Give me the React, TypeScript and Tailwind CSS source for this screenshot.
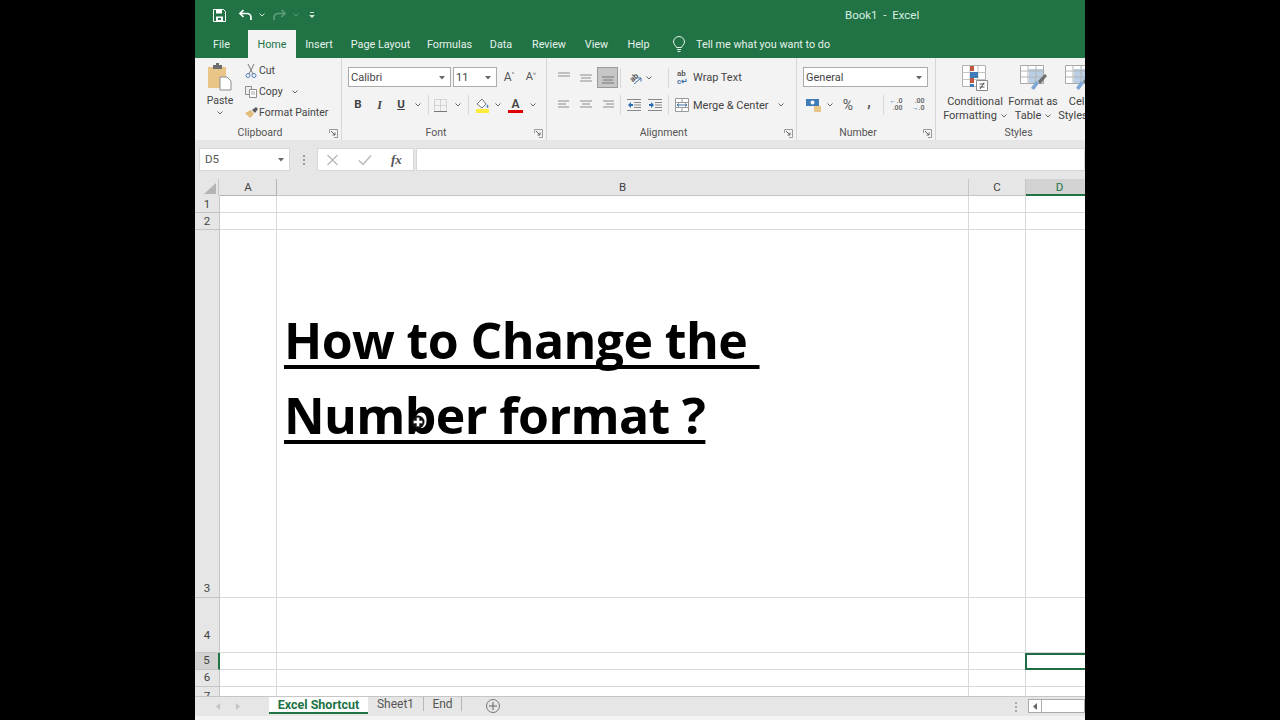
import React from "react";

const Chev = ({ c = "#666" }: { c?: string }) => (
  <svg width="6" height="4" viewBox="0 0 6 4" className="shrink-0">
    <path d="M.5.5 3 3 5.500.5" fill="none" stroke={c} strokeWidth="1" />
  </svg>
);

const Caret = () => (
  <svg width="6" height="4" viewBox="0 0 6 4" className="shrink-0">
    <path d="M0 0h6L3 3.500z" fill="#666" />
  </svg>
);

const Launcher = () => (
  <span className="flex w-[16px] justify-end pr-[3px]">
    <svg width="9" height="9" viewBox="0 0 9 9">
      <path d="M.5 4V.5h8v8H5" fill="none" stroke="#9a9a9a" />
      <path d="M2 2l4 4M6 3.500V6H3.500" fill="none" stroke="#666" />
    </svg>
  </span>
);

const Sep = () => <span className="h-[20px] w-px bg-[#d8d8d8]" />;

const Slot = ({ w, children }: { w: number; children?: React.ReactNode }) => (
  <span className="flex shrink-0 items-center justify-center" style={{ width: w }}>
    {children}
  </span>
);

const Lines = ({ rows, active }: { rows: [number, number, number][]; active?: boolean }) => (
  <svg width="16" height="14" viewBox="0 0 16 14">
    {rows.map(([x1, x2, y], i) => (
      <path key={i} d={`M${x1} ${y}H${x2}`} stroke={active ? "#777" : "#8c8c8c"} strokeWidth="1" />
    ))}
  </svg>
);

const Group = ({
  w,
  label,
  launcher = true,
  children,
}: {
  w: number;
  label: string;
  launcher?: boolean;
  children: React.ReactNode;
}) => (
  <div className="flex h-[82px] shrink-0 flex-col border-r border-[#d6d6d6]" style={{ width: w }}>
    <div className="min-h-0 flex-1">{children}</div>
    <div className="flex h-[14px] items-center text-[10.500px] text-[#555]">
      <span className="flex-1 text-center">{label}</span>
      {launcher ? <Launcher /> : null}
    </div>
  </div>
);

const SmallRow = ({ icon, label, chev }: { icon: React.ReactNode; label: string; chev?: boolean }) => (
  <div className="flex h-[21px] items-center text-[10.500px] text-[#444]">
    <span className="flex w-[16px] justify-center">{icon}</span>
    <span className="pt-px">{label}</span>
    {chev ? (
      <span className="ml-[9px]">
        <Chev />
      </span>
    ) : null}
  </div>
);

const tabs = [
  { name: "File", w: 53 },
  { name: "Home", w: 48, active: true },
  { name: "Insert", w: 46 },
  { name: "Page Layout", w: 77 },
  { name: "Formulas", w: 61 },
  { name: "Data", w: 42 },
  { name: "Review", w: 54 },
  { name: "View", w: 41 },
  { name: "Help", w: 43 },
];

const colHeads = [
  { name: "A", cls: "w-[57px] border-r border-[#b4b4b4]" },
  { name: "B", cls: "w-[692px] border-r border-[#c6c6c6]" },
  { name: "C", cls: "w-[57px] border-r border-[#c6c6c6]" },
  { name: "D", cls: "w-[67px] bg-[#d2d2d2] text-[#217346] border-b-2 border-b-[#217346]" },
];

const rowDefs = [
  { n: "1", h: "h-[17px]", lab: "pb-[1px]" },
  { n: "2", h: "h-[17px]", lab: "pb-[1px]" },
  { n: "3", h: "h-[368px]", lab: "pb-[2px]" },
  { n: "4", h: "h-[55px]", lab: "pb-[10px]" },
  { n: "5", h: "h-[17px]", lab: "pb-[2px]", active: true },
  { n: "6", h: "h-[17px]", lab: "pb-[2px]" },
  { n: "7", h: "h-[17px]", lab: "" },
];

function TitleBar() {
  return (
    <div className="flex h-[30px] items-center bg-[#217346] pl-[18px]">
      <svg width="13" height="13" viewBox="0 0 13 13">
        <path d="M.5.500h10l2 2v10H.5z" fill="none" stroke="#fff" />
        <path d="M3 1h6v3.500H3z" fill="#fff" />
        <path d="M3 7.500h7v5H3z" fill="#fff" />
        <path d="M5 9h3v2H5z" fill="#217346" />
      </svg>
      <svg width="14" height="12" viewBox="0 0 14 12" className="ml-[13px]">
        <path d="M4.500 1 1 4.500 4.500 8" fill="none" stroke="#fff" strokeWidth="1.700" />
        <path d="M1.500 4.500H8a4 4 0 0 1 4 4V11" fill="none" stroke="#fff" strokeWidth="1.700" />
      </svg>
      <span className="ml-[6px]">
        <Chev c="#cfe5d8" />
      </span>
      <svg width="14" height="12" viewBox="0 0 14 12" className="ml-[7px]">
        <path d="M9.500 1 13 4.500 9.500 8" fill="none" stroke="#5c9d79" strokeWidth="1.700" />
        <path d="M12.500 4.500H6a4 4 0 0 0-4 4V11" fill="none" stroke="#5c9d79" strokeWidth="1.700" />
      </svg>
      <span className="ml-[7px]">
        <Chev c="#5c9d79" />
      </span>
      <svg width="6" height="7" viewBox="0 0 6 7" className="ml-[10px]">
        <path d="M1 0h4v1H1zM0 3h6L3 6z" fill="#cfe5d8" />
      </svg>
      <span className="ml-[530px] pt-px text-[11.500px] text-[#d7efe1]">Book1&nbsp; -&nbsp; Excel</span>
    </div>
  );
}

function TabBar() {
  return (
    <div className="flex h-[28px] items-stretch bg-[#217346] text-[10.800px] text-[#e6f2eb]">
      {tabs.map((t) =>
        t.active ? (
          <div
            key={t.name}
            className="flex items-center justify-center bg-[#f3f3f3] pt-[2px] text-[#217346]"
            style={{ width: t.w }}
          >
            {t.name}
          </div>
        ) : (
          <div key={t.name} className="flex items-center justify-center pt-[2px]" style={{ width: t.w }}>
            {t.name}
          </div>
        )
      )}
      <div className="ml-[12px] flex items-center">
        <svg width="14" height="17" viewBox="0 0 14 17">
          <path
            d="M4.500 11.500C4 9.500 1.500 8.500 1.500 6a5.500 5.500 0 0 1 11 0c0 2.500-2.500 3.500-3 5.500z"
            fill="none"
            stroke="#e6f2eb"
          />
          <path d="M5 13.500h4M5.500 15.500h3" stroke="#e6f2eb" />
        </svg>
        <span className="ml-[10px] pt-[2px]">Tell me what you want to do</span>
      </div>
    </div>
  );
}

function Clipboard() {
  return (
    <Group w={147} label="Clipboard">
      <div className="flex pl-[11px] pt-[2px]">
        <div className="mt-[3px] flex w-[28px] flex-col items-center text-[10.500px] text-[#444]">
          <svg width="26" height="28" viewBox="0 0 26 28">
            <path d="M1 4h18v21H1z" fill="#e9c687" />
            <path d="M6 2h3V0h3v2h3v4H6z" fill="#6e6e6e" />
            <path d="M13 14h7l4 4v9H13z" fill="#fff" stroke="#8c8c8c" />
          </svg>
          <span className="mt-[3px] leading-[14px]">Paste</span>
          <span className="mt-[3px]">
            <Chev />
          </span>
        </div>
        <div className="ml-[9px]">
          <SmallRow
            label="Cut"
            icon={
              <svg width="12" height="14" viewBox="0 0 12 14">
                <path d="M3 0l5 10M9 0 4 10" stroke="#7a7a7a" fill="none" />
                <circle cx="3" cy="11.500" r="2" fill="none" stroke="#4f81bd" />
                <circle cx="9" cy="11.500" r="2" fill="none" stroke="#4f81bd" />
              </svg>
            }
          />
          <SmallRow
            label="Copy"
            chev
            icon={
              <svg width="12" height="13" viewBox="0 0 12 13">
                <path d="M.5 1.500h6v8h-6z" fill="#eee" stroke="#8f8f8f" />
                <path d="M4.500 4.500h7v8h-7z" fill="#fff" stroke="#8f8f8f" />
                <path d="M6 7h4M6 9h4" stroke="#aaa" />
              </svg>
            }
          />
          <SmallRow
            label="Format Painter"
            icon={
              <svg width="13" height="12" viewBox="0 0 13 12">
                <path d="M0 6 6 3l3 4-4 4z" fill="#e3bd7d" />
                <path d="M7 3l4-3 2 2-3 4z" fill="#5b5b5b" />
              </svg>
            }
          />
        </div>
      </div>
    </Group>
  );
}

function FontGroup() {
  return (
    <Group w={205} label="Font">
      <div className="flex items-center pl-[6px] pt-[9px]">
        <div className="flex h-[20px] w-[103px] items-center justify-between border border-[#ababab] bg-white pl-[2px] pr-[5px] pt-[2px] text-[11px] text-[#444]">
          Calibri
          <Caret />
        </div>
        <div className="ml-[2px] flex h-[20px] w-[44px] items-center justify-between border border-[#ababab] bg-white pl-[2px] pr-[5px] pt-[2px] text-[11px] text-[#444]">
          11
          <Caret />
        </div>
        <Slot w={24}>
          <span className="text-[12px] text-[#555]">A</span>
          <span className="mb-[8px] text-[6px] text-[#555]">^</span>
        </Slot>
        <Slot w={20}>
          <span className="text-[11px] text-[#555]">A</span>
          <span className="mb-[8px] text-[6px] text-[#555]">˅</span>
        </Slot>
      </div>
      <div className="mt-[8px] flex h-[20px] items-center pl-[6px] text-[#555]">
        <Slot w={20}>
          <span className="text-[11.500px] font-bold text-[#444]">B</span>
        </Slot>
        <Slot w={23}>
          <span className="font-['Liberation_Serif',serif] text-[12px] font-bold italic text-[#444]">I</span>
        </Slot>
        <Slot w={20}>
          <span className="text-[11.500px] font-bold text-[#444] underline">U</span>
        </Slot>
        <Slot w={14}>
          <Chev />
        </Slot>
        <Slot w={6}>
          <Sep />
        </Slot>
        <Slot w={18}>
          <svg width="13" height="13" viewBox="0 0 13 13">
            <path
              d="M.5.500h12v12H.5zM6.500.500v12M.5 6.500h12"
              fill="none"
              stroke="#b5b5b5"
              strokeDasharray="1 1"
            />
            <path d="M0 12.500h13" stroke="#777" />
          </svg>
        </Slot>
        <Slot w={18}>
          <Chev />
        </Slot>
        <Slot w={2}>
          <Sep />
        </Slot>
        <Slot w={26}>
          <svg width="15" height="16" viewBox="0 0 15 16">
            <path d="M2 7l5-5 4 5-4 4z" fill="#fff" stroke="#777" />
            <path d="M12 7c1 1.500 1.500 2 1.500 3s-2 1-2 0 .5-2 .5-3z" fill="#4f81bd" />
            <path d="M1 12h13v4H1z" fill="#ffeb3b" />
          </svg>
        </Slot>
        <Slot w={6}>
          <Chev />
        </Slot>
        <Slot w={29}>
          <span className="flex flex-col items-center">
            <span className="text-[12px] font-semibold leading-[12px] text-[#444]">A</span>
            <span className="h-[3px] w-[15px] bg-[#e00000]" />
          </span>
        </Slot>
        <Slot w={6}>
          <Chev />
        </Slot>
      </div>
    </Group>
  );
}

function Alignment() {
  return (
    <Group w={250} label="Alignment">
      <div className="flex h-[30px] items-center pl-[6px] pt-[9px]">
        <Slot w={22}>
          <Lines rows={[[2, 14, 2], [2, 14, 5]]} />
        </Slot>
        <Slot w={22}>
          <Lines rows={[[2, 14, 4], [3, 13, 7], [2, 14, 10]]} />
        </Slot>
        <span className="flex h-[21px] w-[21px] items-center justify-center border border-[#9a9a9a] bg-[#c6c6c6]">
          <Lines active rows={[[2, 14, 6], [3, 13, 9], [2, 14, 12]]} />
        </span>
        <Slot w={4}>
          <Sep />
        </Slot>
        <Slot w={24}>
          <span className="relative flex h-[16px] w-[18px] items-center justify-center">
            <span className="-rotate-45 text-[8px] font-semibold leading-[8px] text-[#555]">ab</span>
            <svg width="10" height="10" viewBox="0 0 10 10" className="absolute bottom-0 right-0">
              <path d="M1 8 8 2M8 2H4.500M8 2v3.500" fill="none" stroke="#3f6fa5" />
            </svg>
          </span>
        </Slot>
        <Slot w={6}>
          <Chev />
        </Slot>
        <Slot w={16} />
        <Slot w={1}>
          <Sep />
        </Slot>
        <Slot w={24}>
          <span className="pl-[3px] text-[8px] font-semibold leading-[8px] text-[#555]">
            ab
            <br />
            <span className="text-[#3f6fa5]">c↵</span>
          </span>
        </Slot>
        <span className="pt-px text-[11px] text-[#444]">Wrap Text</span>
      </div>
      <div className="mt-[7px] flex h-[20px] items-center pl-[6px]">
        <Slot w={22}>
          <Lines rows={[[2, 13, 3], [2, 10, 6], [2, 13, 9]]} />
        </Slot>
        <Slot w={22}>
          <Lines rows={[[2, 14, 3], [4, 12, 6], [2, 14, 9]]} />
        </Slot>
        <Slot w={21}>
          <Lines rows={[[3, 14, 3], [6, 14, 6], [3, 14, 9]]} />
        </Slot>
        <Slot w={4}>
          <Sep />
        </Slot>
        <Slot w={24}>
          <svg width="14" height="12" viewBox="0 0 14 12">
            <path d="M0 .5h14M0 11.500h14M7 3.500h7M7 6h7M7 8.500h7" stroke="#888" />
            <path d="M1 6l3-3v2h2v2H4v2z" fill="#2a6db0" />
          </svg>
        </Slot>
        <Slot w={18}>
          <svg width="14" height="12" viewBox="0 0 14 12">
            <path d="M0 .5h14M0 11.500h14M7 3.500h7M7 6h7M7 8.500h7" stroke="#888" />
            <path d="M6 6 3 3v2H1v2h2v2z" fill="#2a6db0" />
          </svg>
        </Slot>
        <Slot w={4} />
        <Slot w={1}>
          <Sep />
        </Slot>
        <Slot w={24}>
          <span className="pl-[1px]">
            <svg width="14" height="14" viewBox="0 0 14 14">
              <path d="M.5.500h13v13H.5zM.5 4.500h13M.5 9.500h13M7 .5v4M7 9.500v4" fill="#fff" stroke="#9a9a9a" />
              <path d="M2 7h10M2 7l2-1.500M2 7l2 1.500M12 7l-2-1.500M12 7l-2 1.500" fill="none" stroke="#3f6fa5" />
            </svg>
          </span>
        </Slot>
        <span className="pt-[2px] text-[11px] text-[#444]">Merge &amp; Center</span>
        <span className="ml-[9px]">
          <Chev />
        </span>
      </div>
    </Group>
  );
}

function NumberGroup() {
  return (
    <Group w={139} label="Number">
      <div className="pl-[6px] pt-[9px]">
        <div className="flex h-[20px] w-[125px] items-center justify-between border border-[#ababab] bg-white pl-[2px] pr-[5px] pt-[2px] text-[11px] text-[#444]">
          General
          <Caret />
        </div>
      </div>
      <div className="mt-[8px] flex h-[20px] items-center pl-[6px]">
        <Slot w={20}>
          <svg width="15" height="13" viewBox="0 0 15 13">
            <path d="M0 0h13v7H0z" fill="#3f7cb8" />
            <circle cx="6.500" cy="3.500" r="2" fill="#fff" />
            <path d="M8 7h7v6H8z" fill="#e9c687" />
          </svg>
        </Slot>
        <Slot w={14}>
          <Chev />
        </Slot>
        <Slot w={22}>
          <span className="text-[14px] text-[#555]">%</span>
        </Slot>
        <Slot w={20}>
          <span className="mb-[5px] text-[14px] font-bold leading-[13px] text-[#555]">,</span>
        </Slot>
        <Slot w={8}>
          <Sep />
        </Slot>
        <Slot w={18}>
          <span className="text-right text-[7px] font-semibold leading-[7px] text-[#666]">
            <span className="text-[#2a6db0]">←</span>.0
            <br />
            .00
          </span>
        </Slot>
        <Slot w={26}>
          <span className="text-right text-[7px] font-semibold leading-[7px] text-[#666]">
            .00
            <br />
            <span className="text-[#2a6db0]">→</span>.0
          </span>
        </Slot>
      </div>
    </Group>
  );
}

function StyleBtn({
  w,
  top,
  bottom,
  icon,
}: {
  w: number;
  top: string;
  bottom: string;
  icon: React.ReactNode;
}) {
  return (
    <div className="flex shrink-0 flex-col items-center text-[11px] leading-[14px] text-[#444]" style={{ width: w }}>
      <span className="flex h-[27px] items-end">{icon}</span>
      <span className="mt-[4px] whitespace-nowrap">{top}</span>
      <span className="flex items-center gap-[4px] whitespace-nowrap">
        {bottom}
        <Chev />
      </span>
    </div>
  );
}

const TableIcon = () => (
  <svg width="28" height="27" viewBox="0 0 28 27">
    <path d="M1.500 1.500h23v18h-23z" fill="#fff" stroke="#a8a8a8" />
    <path d="M10 5h14v14H10z" fill="#b9cde4" />
    <path d="M1.500 7h23M1.500 13h23M9 1.500v18M17 1.500v18" stroke="#b5b5b5" />
    <path d="M12 24l5-7 3 2-5 7z" fill="#7fa7d6" />
    <path d="M19 17l7-7 2 2-7 8z" fill="#6e6e6e" />
  </svg>
);

function Styles() {
  return (
    <Group w={166} label="Styles" launcher={false}>
      <div className="flex pl-[7px] pt-[6px]">
        <StyleBtn
          w={64}
          top="Conditional"
          bottom="Formatting"
          icon={
            <svg width="26" height="27" viewBox="0 0 26 27">
              <path d="M.5 1.500h23v21H.5z" fill="#fff" stroke="#b0b0b0" />
              <path d="M8 1.500v21M16 1.500v21M.5 8.500h23M.5 15.500h23" stroke="#c4c4c4" />
              <path d="M8 2h4v5H8zM8 14h4v5H8z" fill="#c0563e" />
              <path d="M8 8h8v6H8z" fill="#3f7cb8" />
              <path d="M8 20h4v3H8z" fill="#3f7cb8" />
              <path d="M14.500 16.500h11v10h-11z" fill="#fff" stroke="#888" />
              <path d="M17.500 20h5M17.500 23h5M22 18.500l-4 6.500" stroke="#555" fill="none" />
            </svg>
          }
        />
        <StyleBtn w={52} top="Format as" bottom="Table" icon={<TableIcon />} />
        <StyleBtn w={38} top="Cell" bottom="Styles" icon={<TableIcon />} />
      </div>
    </Group>
  );
}

function FormulaBar() {
  return (
    <div className="flex h-[39px] items-start bg-[#e6e6e6] pl-[4px] pt-[8px]">
      <div className="flex h-[23px] w-[91px] items-center justify-between border border-[#d6d6d6] bg-white pl-[5px] pr-[5px] text-[11.500px] text-[#555]">
        D5
        <Caret />
      </div>
      <span className="flex h-[23px] w-[27px] flex-col items-center justify-center gap-[2px]">
        <span className="h-[2px] w-[2px] bg-[#999]" />
        <span className="h-[2px] w-[2px] bg-[#999]" />
        <span className="h-[2px] w-[2px] bg-[#999]" />
      </span>
      <div className="flex h-[23px] w-[97px] items-center border border-[#d6d6d6] bg-white pl-[8px]">
        <svg width="13" height="12" viewBox="0 0 13 12">
          <path d="M1.500 1l10 10M11.500 1l-10 10" stroke="#b8b8b8" strokeWidth="1.300" />
        </svg>
        <svg width="14" height="12" viewBox="0 0 14 12" className="ml-[19px]">
          <path d="M1 6.500 5 10.500 13 1.500" fill="none" stroke="#b8b8b8" strokeWidth="1.500" />
        </svg>
        <span className="ml-[19px] font-['Liberation_Serif',serif] text-[13px] font-bold italic text-[#555]">fx</span>
      </div>
      <div className="ml-[2px] h-[23px] flex-1 border border-[#d6d6d6] bg-white" />
    </div>
  );
}

function ColumnHeader() {
  return (
    <div className="flex h-[17px] bg-[#e6e6e6] text-[11.500px] leading-[16px] text-[#444]">
      <div className="flex w-[24px] shrink-0 items-end justify-end border-r border-[#c6c6c6] pb-[2px] pr-[2px]">
        <svg width="12" height="11" viewBox="0 0 12 11">
          <path d="M12 0v11H0z" fill="#b4b4b4" />
        </svg>
      </div>
      <div className="flex pl-px">
        {colHeads.map((c) => (
          <div key={c.name} className={`shrink-0 border-b border-[#ababab] text-center ${c.cls}`}>
            {c.name}
          </div>
        ))}
      </div>
    </div>
  );
}

function Sheet() {
  return (
    <div className="relative h-[500px] overflow-hidden bg-white">
      {rowDefs.map((r) => (
        <div key={r.n} className={`flex ${r.h}`}>
          <div
            className={`${r.lab} ${
              r.active
                ? "flex w-[25px] shrink-0 items-end justify-center border-b border-r-2 border-[#c6c6c6] border-r-[#217346] bg-[#d2d2d2] text-[11.500px] leading-[14px] text-[#444]"
                : "flex w-[25px] shrink-0 items-end justify-center border-b border-r border-[#c6c6c6] bg-[#e6e6e6] text-[11.500px] leading-[14px] text-[#444]"
            }`}
          >
            {r.n}
          </div>
          <div className="w-[57px] shrink-0 border-b border-r border-[#d9d9d9]" />
          <div className="w-[692px] shrink-0 border-b border-r border-[#d9d9d9]">
            {r.n === "3" ? (
              <div className="pl-[7px] pt-[73px] font-['Open_Sans',sans-serif] text-[50px] font-bold leading-[75px] tracking-[-0.6px] text-black">
                <div>
                  <span className="whitespace-pre underline decoration-[3.500px] underline-offset-[6px] [text-decoration-skip-ink:none]">How to Change the </span>
                </div>
                <div>
                  <span className="underline decoration-[3.500px] underline-offset-[6px] [text-decoration-skip-ink:none]">Number format ?</span>
                </div>
              </div>
            ) : null}
          </div>
          <div className="w-[57px] shrink-0 border-b border-r border-[#d9d9d9]" />
          <div
            className={
              r.active
                ? "ml-[-1px] w-[68px] shrink-0 border-2 border-r-0 border-[#1f6b42]"
                : "w-[67px] shrink-0 border-b border-[#d9d9d9]"
            }
          />
        </div>
      ))}
      {/* excel's cell cursor sits over the title */}
      <svg width="14" height="14" viewBox="0 0 14 14" className="absolute left-[216px] top-[219px]">
        <circle cx="7" cy="7" r="6.500" fill="#111" />
        <path d="M5.500 2.500h3v3h3v3h-3v3h-3v-3h-3v-3h3z" fill="#fff" stroke="#333" strokeWidth=".5" />
      </svg>
    </div>
  );
}

function SheetTabs() {
  return (
    <div className="flex h-[20px] items-start border-t border-[#c6c6c6] bg-[#e6e6e6] text-[12px] text-[#555]">
      <span className="mt-[6px] flex w-[74px] justify-center gap-[16px] pr-[8px]">
        <svg width="4" height="7" viewBox="0 0 4 7">
          <path d="M4 0v7L0 3.500z" fill="#c4c4c4" />
        </svg>
        <svg width="4" height="7" viewBox="0 0 4 7">
          <path d="M0 0v7l4-3.500z" fill="#c4c4c4" />
        </svg>
      </span>
      <div className="flex h-[17px] w-[99px] items-center justify-center border-b-2 border-[#217346] bg-white text-[12.500px] font-bold leading-[14px] text-[#217346]">
        Excel Shortcut
      </div>
      <div className="flex h-[14px] w-[56px] items-center justify-center border-r border-[#b8b8b8]">Sheet1</div>
      <div className="flex h-[14px] w-[38px] items-center justify-center border-r border-[#b8b8b8]">End</div>
      <span className="ml-[24px] mt-[2px] flex h-[14px] w-[14px] items-center justify-center rounded-full border border-[#777]">
        <svg width="8" height="8" viewBox="0 0 8 8">
          <path d="M4 0v8M0 4h8" stroke="#666" />
        </svg>
      </span>
      <span className="ml-[515px] mt-[5px] flex flex-col gap-[2px]">
        <span className="h-[2px] w-[2px] bg-[#aaa]" />
        <span className="h-[2px] w-[2px] bg-[#aaa]" />
        <span className="h-[2px] w-[2px] bg-[#aaa]" />
      </span>
      <div className="ml-[11px] mt-[2px] flex h-[14px] flex-1 border border-[#ababab] bg-white">
        <span className="flex w-[13px] items-center justify-center border-r border-[#ababab]">
          <svg width="4" height="7" viewBox="0 0 4 7">
            <path d="M4 0v7L0 3.500z" fill="#666" />
          </svg>
        </span>
      </div>
    </div>
  );
}

export default function App() {
  return (
    <div className="flex h-[720px] w-[1280px] justify-center overflow-hidden bg-black font-['Roboto',sans-serif]">
      <div className="flex w-[890px] flex-col overflow-hidden bg-[#f3f3f3]">
        <TitleBar />
        <TabBar />
        <div className="flex h-[82px] items-start bg-[#f3f3f3]">
          <Clipboard />
          <FontGroup />
          <Alignment />
          <NumberGroup />
          <Styles />
        </div>
        <FormulaBar />
        <ColumnHeader />
        <Sheet />
        <SheetTabs />
      </div>
    </div>
  );
}
